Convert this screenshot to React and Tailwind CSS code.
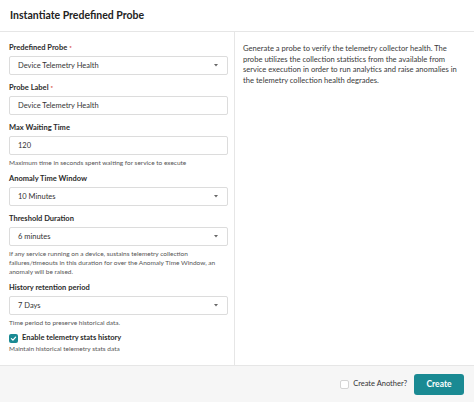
import React from "react";

const Caret = () => (
  <svg width="4" height="3" viewBox="0 0 4 3" className="shrink-0">
    <path d="M0 0 L4 0 L2 2.5 Z" fill="#666" />
  </svg>
);

const Label = ({ children, required }) => (
  <div className="text-[7.5px] font-bold leading-[10px] text-[#2b2b2b] mb-[3px]">
    {children}
    {required && <span className="text-[#d0342c] ml-[2px] align-top text-[6px]">*</span>}
  </div>
);

const Box = ({ value, select }) => (
  <div className="h-[19px] border border-[#dcdcdc] rounded-[2px] bg-white flex items-center justify-between pl-[8px] pr-[9px] text-[7.5px] text-[#333]">
    <span>{value}</span>
    {select && <Caret />}
  </div>
);

const Help = ({ children }) => (
  <div className="mt-[3px] text-[6.5px] leading-[9px] text-[#555]">{children}</div>
);

const App = () => {
  return (
    <div className="w-[474px] h-[402px] flex flex-col bg-white" style={{ fontFamily: "Lato, 'Open Sans', sans-serif" }}>
      <div className="h-[32px] shrink-0 border-b border-[#e6e6e6] flex items-center pl-[10px]">
        <h1 className="text-[10.5px] font-bold text-[#222]">Instantiate Predefined Probe</h1>
      </div>

      <div className="flex flex-1 min-h-0">
        <div className="w-[235px] shrink-0 border-r border-[#e6e6e6] pl-[9px] pr-[6px] pt-[11px]">
          <div className="mb-[8px]">
            <Label required>Predefined Probe</Label>
            <Box value="Device Telemetry Health" select />
          </div>
          <div className="mb-[8px]">
            <Label required>Probe Label</Label>
            <Box value="Device Telemetry Health" />
          </div>
          <div className="mb-[7px]">
            <Label>Max Waiting Time</Label>
            <Box value="120" />
            <Help>Maximum time in seconds spent waiting for service to execute</Help>
          </div>
          <div className="mb-[8px]">
            <Label>Anomaly Time Window</Label>
            <Box value="10 Minutes" select />
          </div>
          <div className="mb-[7px]">
            <Label>Threshold Duration</Label>
            <Box value="6 minutes" select />
            <Help>
              If any service running on a device, sustains telemetry collection failures/timeouts in this duration for over the Anomaly Time Window, an anomaly will be raised.
            </Help>
          </div>
          <div className="mb-[6px]">
            <Label>History retention period</Label>
            <Box value="7 Days" select />
            <Help>Time period to preserve historical data.</Help>
          </div>
          <div>
            <div className="flex items-center gap-[4px] h-[10px]">
              <span className="w-[9px] h-[9px] rounded-[2px] bg-[#1a8a93] flex items-center justify-center">
                <svg width="7" height="7" viewBox="0 0 10 10">
                  <path d="M2 5.2 L4.2 7.3 L8 3" stroke="white" strokeWidth="1.8" fill="none" strokeLinecap="round" strokeLinejoin="round" />
                </svg>
              </span>
              <span className="text-[7.5px] font-bold text-[#2b2b2b]">Enable telemetry stats history</span>
            </div>
            <div className="mt-[1px] text-[6.5px] leading-[9px] text-[#555]">Maintain historical telemetry stats data</div>
          </div>
        </div>

        <div className="flex-1 pl-[8px] pr-[10px] pt-[11px]">
          <p className="text-[7.6px] leading-[10.5px] text-[#3a3a3a]">
            Generate a probe to verify the telemetry collector health. The probe utilizes the collection statistics from the available from service execution in order to run analytics and raise anomalies in the telemetry collection health degrades.
          </p>
        </div>
      </div>

      <div className="h-[37px] shrink-0 border-t border-[#e6e6e6] bg-[#f6f6f6] flex items-center justify-end pr-[10px] gap-[7px]">
        <label className="flex items-center gap-[4px] text-[7.5px] text-[#333]">
          <span className="w-[9px] h-[9px] rounded-[2px] border border-[#d4d4d4] bg-white" />
          Create Another?
        </label>
        <button className="w-[50px] h-[21px] rounded-[3px] bg-[#1a8a93] text-white text-[8.5px] font-bold">
          Create
        </button>
      </div>
    </div>
  );
};

export default App;
